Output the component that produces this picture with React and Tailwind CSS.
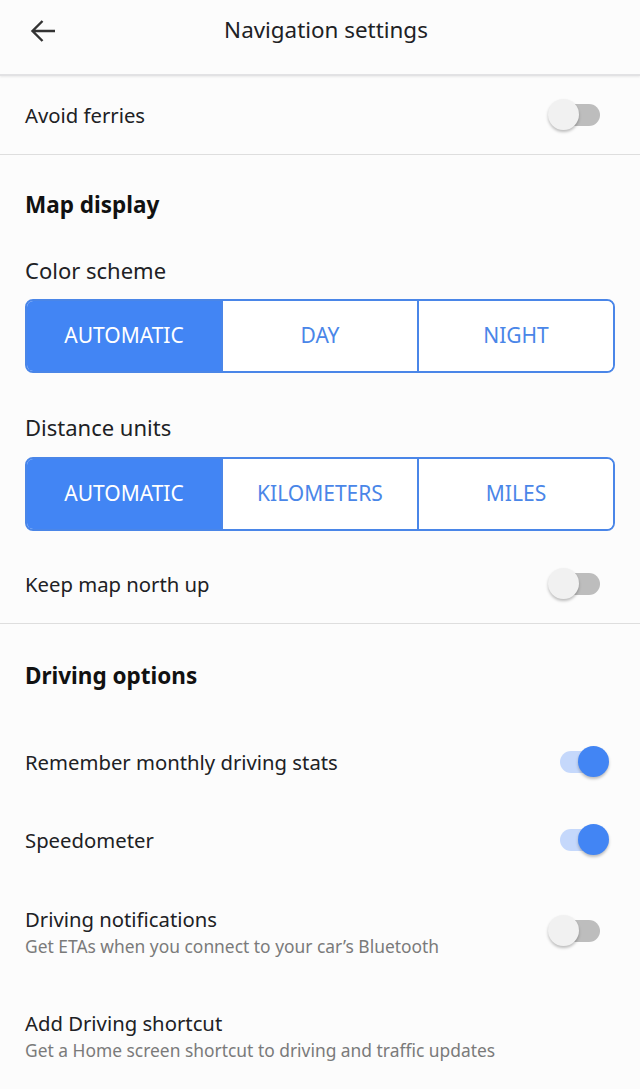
import React from 'react';

const Toggle = ({ on }) => (
  <div className="relative w-[62px] h-[32px] shrink-0">
    <div
      className={`absolute left-[12px] top-[5px] w-[40px] h-[22px] rounded-full ${on ? 'bg-[#c5d8fb]' : 'bg-[#bdbdbd]'}`}
    />
    <div
      className={`absolute top-0 w-[31px] h-[31px] rounded-full shadow-[0_2px_3px_rgba(0,0,0,0.25)] ${on ? 'left-[30px] bg-[#4285f4]' : 'left-0 bg-[#f1f1f1]'}`}
    />
  </div>
);

const Segmented = ({ options }) => (
  <div className="mx-[25px] h-[74px] flex rounded-[8px] border-2 border-[#4a86e8] overflow-hidden">
    {options.map((opt, i) => (
      <div
        key={opt}
        className={`flex-1 flex items-center justify-center text-[21px] ${i > 0 ? 'border-l-2 border-[#4a86e8]' : ''} ${i === 0 ? 'bg-[#4285f4] text-white' : 'bg-white text-[#4a86e8]'}`}
      >
        {opt}
      </div>
    ))}
  </div>
);

const Row = ({ label, on }) => (
  <div className="h-[78px] flex items-center justify-between pl-[25px] pr-[30px]">
    <span className="text-[20.3px] text-[#202124]">{label}</span>
    <Toggle on={on} />
  </div>
);

const TwoLineRow = ({ title, subtitle, toggle }) => (
  <div className="flex items-center justify-between pl-[25px] pr-[30px] h-[104px]">
    <div className="flex flex-col">
      <span className="text-[20.3px] leading-[28px] text-[#202124]">{title}</span>
      <span className="text-[17.4px] leading-[22px] mt-[2px] text-[#7a7a7a]">{subtitle}</span>
    </div>
    {toggle !== undefined && <Toggle on={toggle} />}
  </div>
);

export default function App() {
  return (
    <div className="w-[640px] h-[1089px] bg-[#fcfcfc] overflow-hidden" style={{ fontFamily: '"Noto Sans", Roboto, sans-serif' }}>
      {/* top bar */}
      <div className="relative h-[76px] flex justify-center pt-[14px] pl-[12px] border-b-2 border-[#e2e2e4] shadow-[0_1px_2px_rgba(0,0,0,0.08)]">
        <svg className="absolute left-[30px] top-[19px]" width="26" height="24" viewBox="0 0 26 24" fill="none">
          <path d="M25 12H3M12.5 2L2.5 12l10 10" stroke="#333" strokeWidth="2.4" />
        </svg>
        <span className="text-[22.4px] leading-[32px] text-[#202124]">Navigation settings</span>
      </div>

      <Row label="Avoid ferries" on={false} />
      <div className="h-px bg-[#dedede]" />

      {/* map display */}
      <div className="pt-[25px]">
        <div className="h-[50px] flex items-center px-[25px] text-[22.5px] font-bold text-[#111]">Map display</div>
        <div className="mt-[25px] mb-[14px] h-[30px] leading-[30px] px-[25px] text-[22px] text-[#202124]">Color scheme</div>
        <Segmented options={['AUTOMATIC', 'DAY', 'NIGHT']} />
        <div className="mt-[39px] mb-[15px] h-[30px] leading-[30px] px-[25px] text-[22px] text-[#202124]">Distance units</div>
        <Segmented options={['AUTOMATIC', 'KILOMETERS', 'MILES']} />
        <div className="mt-[14px]">
          <Row label="Keep map north up" on={false} />
        </div>
      </div>
      <div className="h-px bg-[#dedede]" />

      {/* driving options */}
      <div className="pt-[27px]">
        <div className="h-[50px] flex items-center px-[25px] text-[22.5px] font-bold text-[#111]">Driving options</div>
        <div className="mt-[22px]">
          <Row label="Remember monthly driving stats" on />
          <Row label="Speedometer" on />
        </div>
        <TwoLineRow
          title="Driving notifications"
          subtitle="Get ETAs when you connect to your car’s Bluetooth"
          toggle={false}
        />
        <TwoLineRow
          title="Add Driving shortcut"
          subtitle="Get a Home screen shortcut to driving and traffic updates"
        />
      </div>
    </div>
  );
}
